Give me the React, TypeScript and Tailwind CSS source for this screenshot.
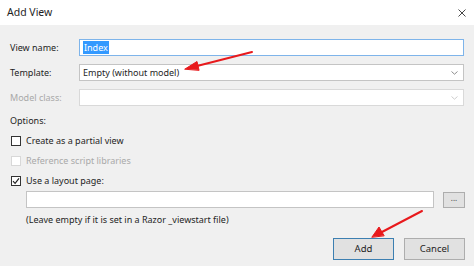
import type { ReactNode } from "react";

// Visual Studio "Add View" dialog with two red annotation arrows on top.

function Field({
  children,
  focused,
  disabled,
  dropdown,
}: {
  children?: ReactNode;
  focused?: boolean;
  disabled?: boolean;
  dropdown?: boolean;
}) {
  return (
    <div
      className={`flex h-[17px] flex-1 items-center border bg-white pl-[3px] pr-[5px] ${
        focused ? "border-[#7eb4ea]" : disabled ? "border-[#d9d9d9]" : "border-[#c4c4c4]"
      }`}
    >
      <div className="flex-1 overflow-hidden whitespace-nowrap leading-[14px]">{children}</div>
      {dropdown && (
        <svg width="7" height="4" viewBox="0 0 7 4" className="shrink-0">
          <path
            d="M0.5 0.5 L3.5 3.2 L6.5 0.5"
            fill="none"
            stroke={disabled ? "#c8c8c8" : "#808080"}
            strokeWidth="0.9"
          />
        </svg>
      )}
    </div>
  );
}

function Check({ checked, disabled, children }: { checked?: boolean; disabled?: boolean; children: ReactNode }) {
  return (
    <div className="flex h-[20px] items-center gap-[5px] pl-px">
      <span
        className={`flex h-[10px] w-[10px] items-center justify-center border bg-white ${
          disabled ? "border-[#d8d8d8] bg-[#eaeaea]" : "border-[#333]"
        }`}
      >
        {checked && (
          <svg width="8" height="8" viewBox="0 0 8 8">
            <path d="M1 4.2 L3.1 6.3 L7 1.4" fill="none" stroke="#222" strokeWidth="1.2" />
          </svg>
        )}
      </span>
      <span className={disabled ? "text-[#a9a9a9]" : "text-[#1e1e1e]"}>{children}</span>
    </div>
  );
}

export default function App() {
  return (
    <div
      className="relative flex h-[266px] w-[474px] flex-col overflow-hidden text-[9px] text-[#1e1e1e]"
      style={{ fontFamily: '"Noto Sans", "Open Sans", sans-serif' }}
    >
      <div className="flex h-[25px] shrink-0 items-center justify-between bg-white pl-[7px] pr-[8px]">
        <span className="text-[10.5px]">Add View</span>
        <svg width="8" height="8" viewBox="0 0 8 8">
          <path d="M0.5 0.5 L7.5 7.5 M7.5 0.5 L0.5 7.5" stroke="#333" strokeWidth="0.9" />
        </svg>
      </div>

      <div className="flex flex-1 flex-col bg-[#f0f0f0] pl-[10px] pr-[10px] pt-[14px]">
        <div className="flex items-center">
          <span className="w-[69px]">View name:</span>
          <Field focused>
            <span className="bg-[#3399ff] px-px text-white">Index</span>
          </Field>
        </div>
        <div className="mt-[8px] flex items-center">
          <span className="w-[69px]">Template:</span>
          <Field dropdown>Empty (without model)</Field>
        </div>
        <div className="mt-[8px] flex items-center">
          <span className="w-[69px] text-[#a9a9a9]">Model class:</span>
          <Field dropdown disabled />
        </div>

        <div className="mt-[7px] flex h-[15px] items-center">Options:</div>
        <div className="mt-[3px]">
          <Check>Create as a partial view</Check>
          <Check disabled>Reference script libraries</Check>
          <Check checked>Use a layout page:</Check>
        </div>

        <div className="flex items-center pl-[16px]">
          <div className="h-[17px] flex-1 border border-[#c4c4c4] bg-white" />
          <button className="ml-[9px] mr-[-1px] flex h-[16px] w-[22px] items-start justify-center border border-[#adadad] bg-[#e1e1e1] text-[8px] leading-[10px] text-[#444]">
            ...
          </button>
        </div>
        <div className="mt-[4px] flex h-[15px] items-center pl-[16px]">
          (Leave empty if it is set in a Razor _viewstart file)
        </div>

        <div className="mt-[11px] flex justify-end gap-[10px]">
          <button className="h-[22px] w-[61px] border border-[#3c7fb1] bg-[#e1e1e1] text-[9.5px] text-[#1e1e1e]">
            Add
          </button>
          <button className="mr-[-1px] h-[22px] w-[61px] border border-[#adadad] bg-[#e1e1e1] text-[9.5px] text-[#1e1e1e]">
            Cancel
          </button>
        </div>
      </div>

      {/* red annotation arrows */}
      <svg className="pointer-events-none absolute inset-0" width="474" height="266" viewBox="0 0 474 266">
        <g stroke="#e8191c" strokeWidth="2" strokeLinecap="round" fill="#e8191c">
          <line x1="252" y1="52" x2="195" y2="66.5" />
          <path d="M185 69 L197 61.5 L199 70 Z" strokeWidth="1" strokeLinejoin="round" />
          <line x1="422" y1="211" x2="381" y2="232.5" />
          <path d="M372 237 L379 227 L384 235.5 Z" strokeWidth="1" strokeLinejoin="round" />
        </g>
      </svg>
    </div>
  );
}
